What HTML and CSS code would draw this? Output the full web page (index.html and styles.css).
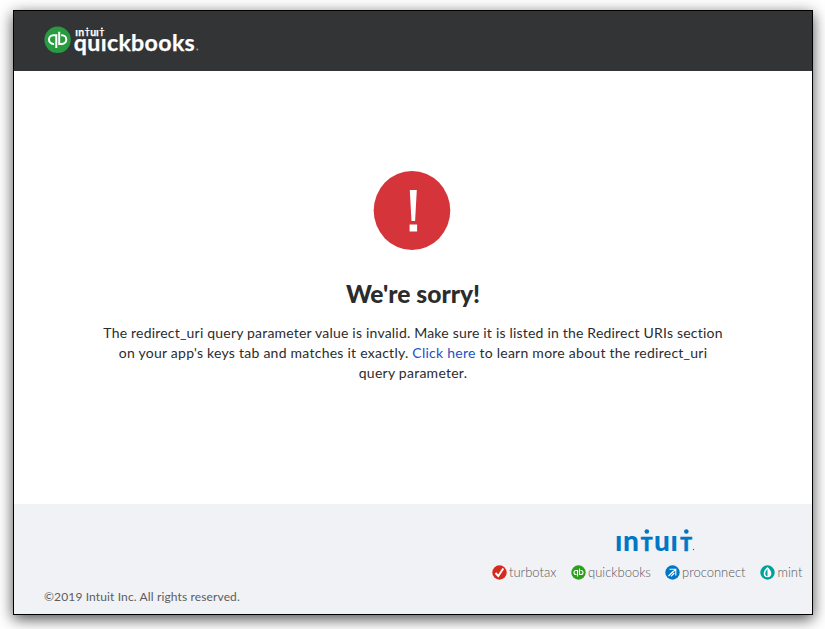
FILE: index.html
```html
<!DOCTYPE html>
<html lang="en">
<head>
  <meta charset="UTF-8">
  <title>Intuit QuickBooks - Error</title>
  <link rel="stylesheet" href="styles.css">
</head>
<body>
  <div class="page">
    <header class="header">
      <svg class="logo" width="160" height="36" viewBox="0 0 160 36">
        <circle cx="13.6" cy="15.8" r="13.2" fill="#289b40"/>
        <g fill="none" stroke="#fff" stroke-width="2">
          <path d="M12.3 24V11.3H9.3a4.3 4.3 0 0 0 0 8.6h.8"/>
          <path d="M15.2 7.7v12.2H18a4.3 4.3 0 0 0 0-8.6h-.8"/>
        </g>
        <g class="logo-text">
          <text x="31.2 34.2" y="11.5" font-size="10.5">ın<tspan x="40.9" font-size="7.6">T</tspan><tspan x="46.3 52">uı</tspan><tspan x="55.5" font-size="7.6">T</tspan></text>
          <text x="29.8" y="27.4" font-size="23.2" textLength="121">quıckbooks</text>
        </g>
        <circle cx="43.3" cy="4.5" r="1" fill="#fff"/>
        <circle cx="57.9" cy="4.5" r="1" fill="#fff"/>
        <circle cx="153.3" cy="25.5" r="1.1" fill="#999"/>
      </svg>
    </header>
    <main class="content">
      <svg class="alert" width="80" height="80" viewBox="0 0 80 80">
        <ellipse cx="39" cy="39.5" rx="38.3" ry="39.5" fill="#d5343a"/>
        <path d="M36.8 19h7l-1.7 31h-3.6zM36.6 53.5h7.5v7h-7.5z" fill="#fff"/>
      </svg>
      <h1>We're sorry!</h1>
      <p><span class="line line1">The redirect_uri query parameter value is invalid. Make sure it is listed in the Redirect URIs section</span><br>
      <span class="line">on your app's keys tab and matches it exactly. <a href="#">Click here</a> to learn more about the redirect_uri</span><br>
      <span class="line">query parameter.</span></p>
    </main>
    <footer class="footer">
      <div class="copyright">©2019 Intuit Inc. All rights reserved.</div>
      <div class="brands">
        <svg class="intuit" width="80" height="24" viewBox="0 0 80 24">
          <text x="-1 7" y="21.5" font-size="28">ın<tspan x="24.8" class="tee">T</tspan><tspan x="38 54.5">uı</tspan><tspan x="64.3" class="tee">T</tspan></text>
          <circle cx="30.8" cy="2.5" r="2.3"/>
          <circle cx="70.3" cy="2.5" r="2.3"/>
          <circle cx="77.5" cy="20.5" r=".7"/>
        </svg>
        <ul class="products">
          <li>
            <svg width="15" height="15" viewBox="0 0 15 15"><circle cx="7.5" cy="7.5" r="7.2" fill="#d52b1e"/><path d="M3.5 8l2.8 3 5-7.5" fill="none" stroke="#fff" stroke-width="2"/></svg>
            <span>turbotax</span>
          </li>
          <li>
            <svg width="15" height="15" viewBox="0 0 15 15"><circle cx="7.5" cy="7.5" r="7.2" fill="#2ca01c"/><path d="M6.5 11.5V5.5H5a2 2 0 0 0 0 4h.5M8.5 3.5v6H10a2 2 0 0 0 0-4h-.5" fill="none" stroke="#fff" stroke-width="1.1"/></svg>
            <span>quickbooks</span>
          </li>
          <li>
            <svg width="15" height="15" viewBox="0 0 15 15"><circle cx="7.5" cy="7.5" r="7.2" fill="#0077c5"/><path d="M4.5 4.2h6.3v6.3M10.6 4.4L6.8 8.2M8 6.5L3.5 11M9.3 8L6 11.3" fill="none" stroke="#fff" stroke-width="1.1"/></svg>
            <span>proconnect</span>
          </li>
          <li>
            <svg width="15" height="15" viewBox="0 0 15 15"><circle cx="7.5" cy="7.5" r="7.2" fill="#00a09b"/><path d="M7.5 2C4.5 5 3.7 6.8 3.7 8.5a3.8 3.8 0 0 0 7.6 0C11.3 6.8 10.5 5 7.5 2z" fill="#fff"/><path d="M7.5 4v7.5c-3-.8-3-4.5 0-7.5z" fill="#00a09b"/></svg>
            <span>mint</span>
          </li>
        </ul>
      </div>
    </footer>
  </div>
</body>
</html>
```
FILE: styles.css
```css
* { box-sizing: border-box; }
body { margin: 0; padding: 10px 12px 0 13px; height: 629px; overflow: hidden; background: #fff; font-family: Lato, "Open Sans", sans-serif; color: #393a3d; }
.page { display: flex; flex-direction: column; width: 800px; height: 605px; border: 1px solid #000; background: #fff; box-shadow: 0 4px 14px rgba(0,0,0,0.7); }
.header { flex: none; height: 60px; padding: 13px 0 0 30px; background: #333436; }
.logo { display: block; overflow: visible; }
.logo-text { font-weight: 700; fill: #fff; stroke: #fff; stroke-width: 0.25; }
.content { flex: 1; padding-top: 100px; text-align: center; }
.alert { display: block; margin: 0 auto; }
h1 { margin: 26px 0 0; font-size: 24.6px; line-height: 33px; font-weight: 900; color: #2b2c2e; }
p { margin: 13px 0 0; font-size: 14px; line-height: 20px; color: #2b2c2e; }
.line { white-space: nowrap; letter-spacing: 0.25px; }
.line1 { letter-spacing: 0.2px; }
a { color: #2350c4; text-decoration: none; }
.footer { flex: none; display: flex; justify-content: space-between; height: 110px; background: #f1f2f6; }
.copyright { align-self: flex-end; padding: 0 0 9px 30px; font-size: 12px; line-height: 16px; letter-spacing: 0.13px; color: #5b5c60; }
.brands { display: flex; flex-direction: column; align-items: flex-end; padding-top: 25px; }
.intuit { display: block; margin-right: 116px; font-weight: 900; fill: #0077c5; overflow: visible; }
.tee { font-size: 19.5px; stroke: #0077c5; stroke-width: 0.6px; }
.products { display: grid; grid-template-columns: 79px 94px 95.5px 52px; margin: 11px 0 0; padding: 0; list-style: none; }
.products li { display: flex; align-items: center; gap: 2.5px; height: 17px; font-size: 13px; line-height: 17px; font-weight: 300; color: #55565a; }
```
